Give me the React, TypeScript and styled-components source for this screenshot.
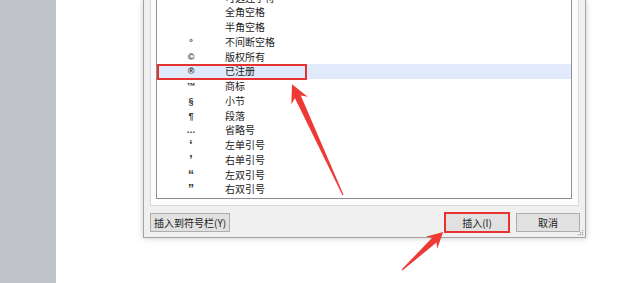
import React from "react";
import styled, { createGlobalStyle } from "styled-components";

const GlobalStyle = createGlobalStyle`
  html, body {
    margin: 0;
    padding: 0;
    background: #ffffff;
  }
`;

const Stage = styled.div`
  position: relative;
  display: flex;
  width: 620px;
  height: 283px;
  overflow: hidden;
  background: #ffffff;
  font-family: "Noto Sans CJK SC", "Noto Sans", sans-serif;
`;

const Backdrop = styled.div`
  flex: 0 0 56px;
  background: #bfc2c9;
`;

const Page = styled.div`
  flex: 0 0 87px;
  background: #ffffff;
`;

const Dialog = styled.div`
  position: relative;
  flex: 0 0 443px;
  box-sizing: border-box;
  height: 238px;
  display: flex;
  flex-direction: column;
  padding: 0 6px 5px 6px;
  background: #f0f0f0;
  border: 1px solid #a3a3a3;
  border-top: none;
  box-shadow: 0 0 6px rgba(0, 0, 0, 0.22);
`;

const TabPanel = styled.div`
  flex: 1;
  min-height: 0;
  display: flex;
  flex-direction: column;
  padding: 0 6px 6px 5px;
  background: #fcfcfc;
  border: 1px solid #d9d9d9;
  border-top: none;
`;

const ListBox = styled.div`
  flex: 1;
  min-height: 0;
  display: flex;
  flex-direction: column;
  justify-content: flex-end;
  overflow: hidden;
  padding-bottom: 1px;
  background: #ffffff;
  border: 1px solid #8d8f94;
  border-top: none;
`;

const Row = styled.div<{ $selected?: boolean }>`
  position: relative;
  flex: 0 0 14.75px;
  display: flex;
  align-items: center;
  background: ${(p) => (p.$selected ? "#e0eafa" : "transparent")};
  color: #1c1c1c;
  font-size: 10px;
  line-height: 14.75px;
`;

const Symbol = styled.span<{ $big?: boolean }>`
  flex: 0 0 68px;
  text-align: center;
  font-family: "Liberation Sans", "DejaVu Sans", sans-serif;
  font-size: ${(p) => (p.$big ? "12px" : "9px")};
  font-weight: bold;
  color: #333333;
`;

const Label = styled.span`
  white-space: nowrap;
`;

const Callout = styled.span`
  position: absolute;
  left: 0;
  top: 0;
  width: 150px;
  height: 16px;
  box-sizing: border-box;
  border: 2px solid #e8322f;
`;

const ButtonRow = styled.div`
  display: flex;
  align-items: center;
  margin-top: 7px;
  margin-right: -1px;
`;

const Button = styled.button<{ $default?: boolean }>`
  position: relative;
  box-sizing: border-box;
  height: 19px;
  padding: 0 3px;
  margin: 0;
  background: #e1e1e1;
  border: 1px solid ${(p) => (p.$default ? "#3c7fb1" : "#adadad")};
  color: #1a1a1a;
  font-family: "Noto Sans CJK SC", "Noto Sans", sans-serif;
  font-size: 10px;
  line-height: 17px;
  white-space: nowrap;
`;

const WideButton = styled(Button)`
  width: 64px;
  text-align: center;
`;

const Spacer = styled.div`
  flex: 1;
`;

const Gap = styled.div`
  flex: 0 0 7px;
`;

const ButtonCallout = styled.span`
  position: absolute;
  inset: -2px;
  border: 2px solid #e8322f;
`;

const Grip = styled.svg`
  position: absolute;
  right: 1px;
  bottom: 1px;
`;

const Overlay = styled.svg`
  position: absolute;
  inset: 0;
  pointer-events: none;
`;

const rows = [
  { sym: "", label: "可选连字符" },
  { sym: "", label: "全角空格" },
  { sym: "", label: "半角空格" },
  { sym: "°", label: "不间断空格" },
  { sym: "©", label: "版权所有" },
  { sym: "®", label: "已注册", selected: true },
  { sym: "™", label: "商标" },
  { sym: "§", label: "小节" },
  { sym: "¶", label: "段落" },
  { sym: "…", label: "省略号" },
  { sym: "‘", label: "左单引号", big: true },
  { sym: "’", label: "右单引号", big: true },
  { sym: "“", label: "左双引号", big: true },
  { sym: "”", label: "右双引号", big: true },
];

// tail point, pointing along +x, head at the far end
const arrowPoints = (len: number, head: number, half: number) =>
  [
    [0, -0.6],
    [len - head + 4, -3.2],
    [len - head, -half],
    [len, 0],
    [len - head, half],
    [len - head + 4, 3.2],
    [0, 0.6],
  ]
    .map(([x, y]) => `${x},${y}`)
    .join(" ");

const Arrow = ({
  x,
  y,
  angle,
  len,
  head,
  half,
}: {
  x: number;
  y: number;
  angle: number;
  len: number;
  head: number;
  half: number;
}) => (
  <g transform={`translate(${x} ${y}) rotate(${angle})`}>
    <polygon points={arrowPoints(len, head, half)} fill="#ee3a35" />
  </g>
);

export default function App() {
  return (
    <>
      <GlobalStyle />
      <Stage>
        <Backdrop />
        <Page />
        <Dialog>
          <TabPanel>
            <ListBox>
              {rows.map((r) => (
                <Row key={r.label} $selected={r.selected}>
                  <Symbol $big={r.big}>{r.sym}</Symbol>
                  <Label>{r.label}</Label>
                  {r.selected && <Callout />}
                </Row>
              ))}
            </ListBox>
          </TabPanel>
          <ButtonRow>
            <Button>插入到符号栏(Y)</Button>
            <Spacer />
            <WideButton $default>
              插入(I)
              <ButtonCallout />
            </WideButton>
            <Gap />
            <WideButton>取消</WideButton>
          </ButtonRow>
          <Grip width="7" height="7" viewBox="0 0 7 7">
            <g fill="#a0a0a0">
              <rect x="5" y="1" width="1.2" height="1.2" />
              <rect x="3" y="3" width="1.2" height="1.2" />
              <rect x="5" y="3" width="1.2" height="1.2" />
              <rect x="1" y="5" width="1.2" height="1.2" />
              <rect x="3" y="5" width="1.2" height="1.2" />
              <rect x="5" y="5" width="1.2" height="1.2" />
            </g>
          </Grip>
        </Dialog>
        <Overlay width="620" height="283" viewBox="0 0 620 283">
          <Arrow x={343} y={195} angle={-114.7} len={122} head={18} half={9} />
          <Arrow x={402} y={270} angle={-42.7} len={56} head={16} half={8.5} />
        </Overlay>
      </Stage>
    </>
  );
}
